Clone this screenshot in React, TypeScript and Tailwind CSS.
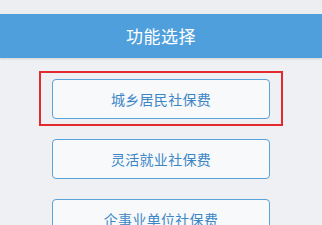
import React from 'react'

const items = ['城乡居民社保费', '灵活就业社保费', '企事业单位社保费']

export default function App() {
  return (
    <div
      className="w-[322px] h-[225px] overflow-hidden bg-[#eef0f3]"
      style={{ fontFamily: '"Noto Sans CJK SC", "Noto Sans", sans-serif' }}
    >
      <div className="h-[14px] bg-[#eceef1]" />
      {/* Header */}
      <div className="h-[44px] bg-[#4f9fdc] flex items-center justify-center shadow-[0_1px_2px_rgba(0,0,0,0.12)]">
        <h1 className="text-[17px] text-white tracking-[0.5px]">功能选择</h1>
      </div>

      {/* List */}
      <div className="flex flex-col items-center pt-[21px] gap-[20px]">
        {items.map((label, i) => (
          <div key={label} className="relative">
            {i === 0 && (
              <div className="absolute -left-[13px] -top-[8px] -right-[13px] -bottom-[7px] border-2 border-[#e52a2f] pointer-events-none" />
            )}
            <button className="w-[218px] h-[40px] bg-[#f7f9fb] border border-[#5aa2d8] rounded-[4px] text-[14px] text-[#3c86c6] tracking-[0.3px]">
              {label}
            </button>
          </div>
        ))}
      </div>
    </div>
  )
}
